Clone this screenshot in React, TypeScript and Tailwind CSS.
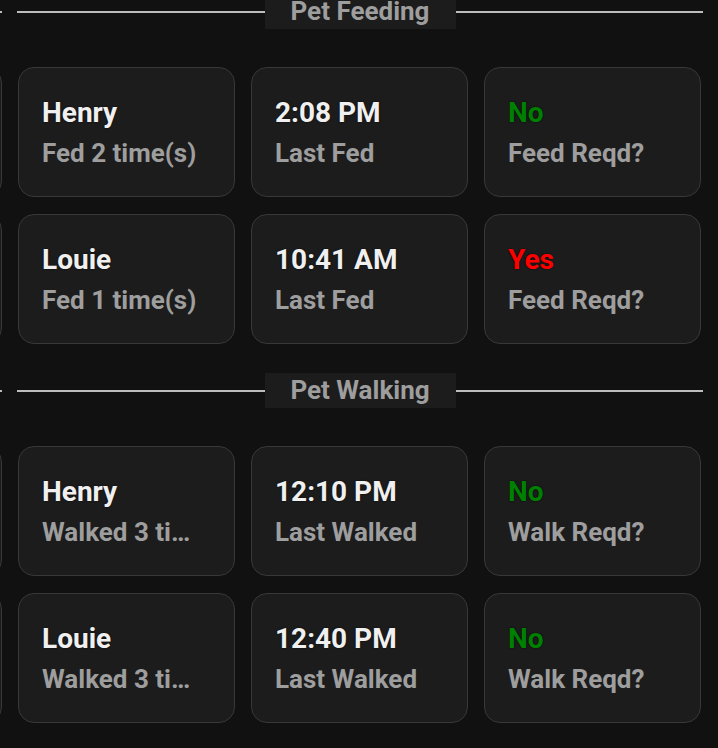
import React from 'react';

type Tile = { primary: string; secondary: string; tone?: 'green' | 'red' };

const feeding: Tile[][] = [
  [
    { primary: 'Henry', secondary: 'Fed 2 time(s)' },
    { primary: '2:08 PM', secondary: 'Last Fed' },
    { primary: 'No', secondary: 'Feed Reqd?', tone: 'green' },
  ],
  [
    { primary: 'Louie', secondary: 'Fed 1 time(s)' },
    { primary: '10:41 AM', secondary: 'Last Fed' },
    { primary: 'Yes', secondary: 'Feed Reqd?', tone: 'red' },
  ],
];

const walking: Tile[][] = [
  [
    { primary: 'Henry', secondary: 'Walked 3 times' },
    { primary: '12:10 PM', secondary: 'Last Walked' },
    { primary: 'No', secondary: 'Walk Reqd?', tone: 'green' },
  ],
  [
    { primary: 'Louie', secondary: 'Walked 3 times' },
    { primary: '12:40 PM', secondary: 'Last Walked' },
    { primary: 'No', secondary: 'Walk Reqd?', tone: 'green' },
  ],
];

function Separator({ title }: { title: string }) {
  return (
    <div className="flex items-center h-[35px]">
      <div className="w-[2px] h-[2px] bg-[#bdbdbd]" />
      <div className="w-[15px]" />
      <div className="flex-1 h-[2px] bg-[#bdbdbd]" />
      <div className="w-[191px] h-[35px] bg-[#1c1c1c] text-center text-[26px] leading-[35px] font-bold text-[#9e9e9e]">
        {title}
      </div>
      <div className="flex-1 h-[2px] bg-[#bdbdbd]" />
      <div className="w-[15px]" />
    </div>
  );
}

function Card({ tile }: { tile?: Tile }) {
  const color =
    tile?.tone === 'green' ? 'text-[#008000]' : tile?.tone === 'red' ? 'text-[#ff0000]' : 'text-[#f0f0f0]';
  return (
    <div className="w-[217px] h-[130px] shrink-0 rounded-[16px] border border-[#383838] bg-[#1c1c1c] pl-[23px] pr-[26px] pt-[25px]">
      {tile && (
        <>
          <div className={`text-[28px] leading-[40px] font-bold truncate ${color} [text-shadow:0_0_2px_rgba(0,0,0,0.8)]`}>
            {tile.primary}
          </div>
          <div className="text-[26px] leading-[40px] font-bold text-[#9e9e9e] truncate">
            {tile.secondary}
          </div>
        </>
      )}
    </div>
  );
}

function Section({ title, rows }: { title: string; rows: Tile[][] }) {
  return (
    <div>
      <Separator title={title} />
      <div className="mt-[38px] flex flex-col gap-[17px]">
        {rows.map((row, i) => (
          <div key={i} className="flex gap-4 -ml-[215px]">
            <Card />
            {row.map((t, j) => (
              <Card key={j} tile={t} />
            ))}
          </div>
        ))}
      </div>
    </div>
  );
}

export default function App() {
  return (
    <div className="w-[718px] h-[748px] overflow-hidden bg-[#111111]" style={{ fontFamily: 'Roboto, "Noto Sans", sans-serif' }}>
      <div className="-mt-[6px] flex flex-col gap-[29px]">
        <Section title="Pet Feeding" rows={feeding} />
        <Section title="Pet Walking" rows={walking} />
      </div>
    </div>
  );
}
